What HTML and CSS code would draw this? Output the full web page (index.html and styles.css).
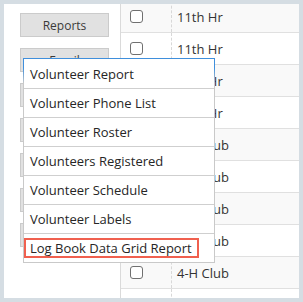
FILE: index.html
```html
<!DOCTYPE html>
<html>
<head>
<meta charset="utf-8">
<link rel="stylesheet" href="styles.css">
</head>
<body>
<div class="panel">
  <div class="side">
    <div class="btn">Reports</div>
    <div class="btn">Email</div>
    <div class="btn"></div>
    <div class="btn"></div>
    <div class="btn"></div>
    <div class="btn"></div>
    <div class="btn"></div>
  </div>
  <div class="grid">
    <div class="rows">
      <div class="row"><div class="cell-check"><span class="box"></span></div><div class="cell-text">11th Hr</div></div>
      <div class="row"><div class="cell-check"><span class="box"></span></div><div class="cell-text">11th Hr</div></div>
      <div class="row"><div class="cell-check"><span class="box"></span></div><div class="cell-text">11th Hr</div></div>
      <div class="row"><div class="cell-check"><span class="box"></span></div><div class="cell-text">11th Hr</div></div>
      <div class="row"><div class="cell-check"><span class="box"></span></div><div class="cell-text">4-H Club</div></div>
      <div class="row"><div class="cell-check"><span class="box"></span></div><div class="cell-text">4-H Club</div></div>
      <div class="row"><div class="cell-check"><span class="box"></span></div><div class="cell-text">4-H Club</div></div>
      <div class="row"><div class="cell-check"><span class="box"></span></div><div class="cell-text">4-H Club</div></div>
      <div class="row"><div class="cell-check"><span class="box"></span></div><div class="cell-text">4-H Club</div></div>
      <div class="row"><div class="cell-check"></div><div class="cell-text"></div></div>
    </div>
  </div>
  <ul class="menu">
    <li class="item first">Volunteer Report</li>
    <li class="item">Volunteer Phone List</li>
    <li class="item">Volunteer Roster</li>
    <li class="item">Volunteers Registered</li>
    <li class="item">Volunteer Schedule</li>
    <li class="item">Volunteer Labels</li>
    <li class="item last"><span class="highlight">Log Book Data Grid Report</span></li>
  </ul>
</div>
</body>
</html>
```
FILE: styles.css
```css
html, body {
  margin: 0;
  padding: 0;
}
body {
  background: #d5dde3;
  padding: 4px;
  font-family: "Open Sans", "Liberation Sans", sans-serif;
}
.panel {
  position: relative;
  width: 295px;
  height: 294px;
  background: #ffffff;
  display: flex;
  overflow: hidden;
}
.side {
  width: 116px;
  flex: none;
  box-sizing: border-box;
  padding: 9px 0 0 16px;
  display: flex;
  flex-direction: column;
  gap: 11px;
}
.btn {
  width: 89px;
  height: 24px;
  box-sizing: border-box;
  background: #e1e1e1;
  border: 1px solid #cbcbcb;
  display: flex;
  align-items: center;
  justify-content: center;
  font-size: 12px;
  color: #3a3a3a;
  flex: none;
}
.grid {
  flex: 1;
  border-left: 1px solid #dadada;
  overflow: hidden;
}
.rows {
  margin-top: -3px;
}
.row {
  height: 32px;
  box-sizing: border-box;
  border-bottom: 1px solid #e0e0e0;
  display: flex;
  background: #ffffff;
}
.row:nth-child(odd) {
  background: #f9f9f9;
}
.cell-check {
  width: 51px;
  flex: none;
  box-sizing: border-box;
  padding-left: 9px;
  border-right: 1px dashed #d8d8d8;
  display: flex;
  align-items: center;
}
.box {
  width: 13px;
  height: 13px;
  box-sizing: border-box;
  border: 1px solid #707070;
  border-radius: 3px;
  background: #ffffff;
  margin-top: -1px;
}
.cell-text {
  padding-left: 5px;
  display: flex;
  align-items: center;
  font-size: 13px;
  color: #333333;
  white-space: nowrap;
}
.menu {
  position: absolute;
  left: 19px;
  top: 54px;
  width: 192px;
  margin: 0;
  padding: 0;
  list-style: none;
  background: #ffffff;
  border: 1px solid #c9c9c9;
  box-sizing: border-box;
}
.menu::before {
  content: "";
  position: absolute;
  left: -1px;
  right: -1px;
  top: -1px;
  height: 24px;
  border: 1px solid #3f8fdc;
  border-bottom: none;
  -webkit-mask-image: linear-gradient(to bottom, #000 0%, #000 40%, transparent 100%);
  mask-image: linear-gradient(to bottom, #000 0%, #000 40%, transparent 100%);
}
.item {
  height: 29px;
  box-sizing: border-box;
  border-bottom: 1px solid #cfcfcf;
  padding-left: 6px;
  display: flex;
  align-items: center;
  font-size: 13px;
  color: #262626;
  white-space: nowrap;
}
.item.first {
  height: 30px;
}
.item.last {
  border-bottom: none;
  height: 28px;
  padding-left: 0;
}
.highlight {
  display: flex;
  align-items: center;
  height: 20px;
  width: 175px;
  box-sizing: border-box;
  border: 2px solid #f0604f;
  padding-left: 4px;
}
```
